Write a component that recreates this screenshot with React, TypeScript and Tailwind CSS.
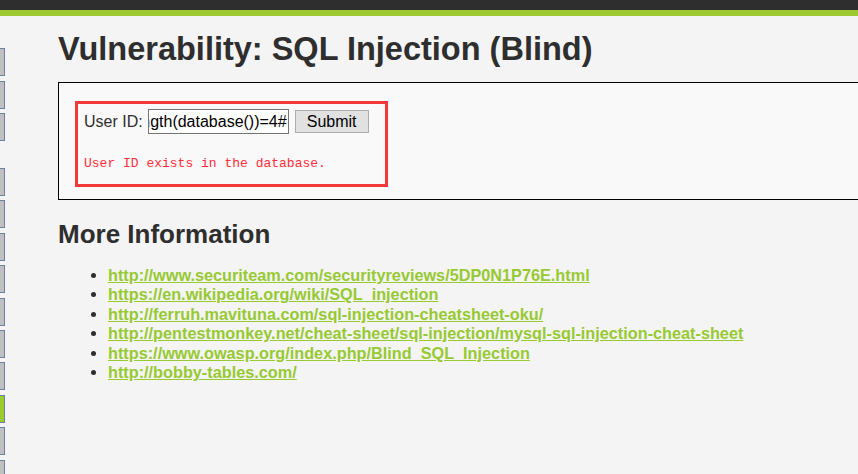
import React from "react";

const links = [
  "http://www.securiteam.com/securityreviews/5DP0N1P76E.html",
  "https://en.wikipedia.org/wiki/SQL_injection",
  "http://ferruh.mavituna.com/sql-injection-cheatsheet-oku/",
  "http://pentestmonkey.net/cheat-sheet/sql-injection/mysql-sql-injection-cheat-sheet",
  "https://www.owasp.org/index.php/Blind_SQL_Injection",
  "http://bobby-tables.com/",
];

function SideBtn({ active }: { active?: boolean }) {
  return (
    <div
      className={
        "h-[28px] w-[5px] border-r border-y border-[#6f7f9f] " +
        (active ? "bg-[#9acb2f]" : "bg-[#c0c0c0]")
      }
    />
  );
}

export default function App() {
  return (
    <div className="h-[474px] w-[858px] overflow-hidden bg-[#f4f4f4] font-['Liberation_Sans',Arial,sans-serif] text-[#2e2e2e]">
      <div className="h-[10px] bg-[#2e2e2e]" />
      <div className="h-[6px] bg-[#9ec830]" />
      <div className="flex">
        <div className="flex w-[58px] flex-col pt-[32px]">
          <div className="flex flex-col gap-[4.5px]">
            <SideBtn />
            <SideBtn />
            <SideBtn />
          </div>
          <div className="mt-[27px] flex flex-col gap-[4.4px]">
            <SideBtn />
            <SideBtn />
            <SideBtn />
            <SideBtn />
            <SideBtn />
            <SideBtn />
            <SideBtn />
            <SideBtn active />
            <SideBtn />
            <SideBtn />
          </div>
        </div>
        <div className="flex-1">
          <h1 className="mt-[13px] whitespace-nowrap text-[32.5px] font-bold leading-[40px]">
            Vulnerability: SQL Injection (Blind)
          </h1>
          <div className="mt-[13px] -mr-[20px] border border-black bg-[#f8f9f8] pb-[12px] pl-[16px] pt-[18px]">
            <div className="h-[86px] w-[313px] border-[3px] border-[#f23a3a] pl-[6px] pt-[5px]">
              <div className="flex items-center text-[16px]">
                <span className="mr-[5px]">User ID:</span>
                <div className="flex h-[25px] w-[141px] justify-end overflow-hidden border border-[#767676] bg-white pr-[1px]">
                  <span className="whitespace-nowrap leading-[23px] text-black">
                    length(database())=4#
                  </span>
                </div>
                <button className="ml-[6px] h-[23px] w-[74px] border border-[#adadad] bg-[#e1e1e1] text-[16px] leading-[21px] text-black">
                  Submit
                </button>
              </div>
              <div className="mt-[22px] font-['Liberation_Mono',monospace] text-[13px] leading-[16px] text-[#ff2d3c]">
                User ID exists in the database.
              </div>
            </div>
          </div>
          <h2 className="mt-[19px] whitespace-nowrap text-[26px] font-bold leading-[30px]">More Information</h2>
          <ul className="mt-[17px] list-disc pl-[50px] text-[16.25px] leading-[19.4px] marker:text-[#2e2e2e]">
            {links.map((l) => (
              <li key={l}>
                <a href="#" className="font-bold text-[#97c932] underline">
                  {l}
                </a>
              </li>
            ))}
          </ul>
        </div>
      </div>
    </div>
  );
}
